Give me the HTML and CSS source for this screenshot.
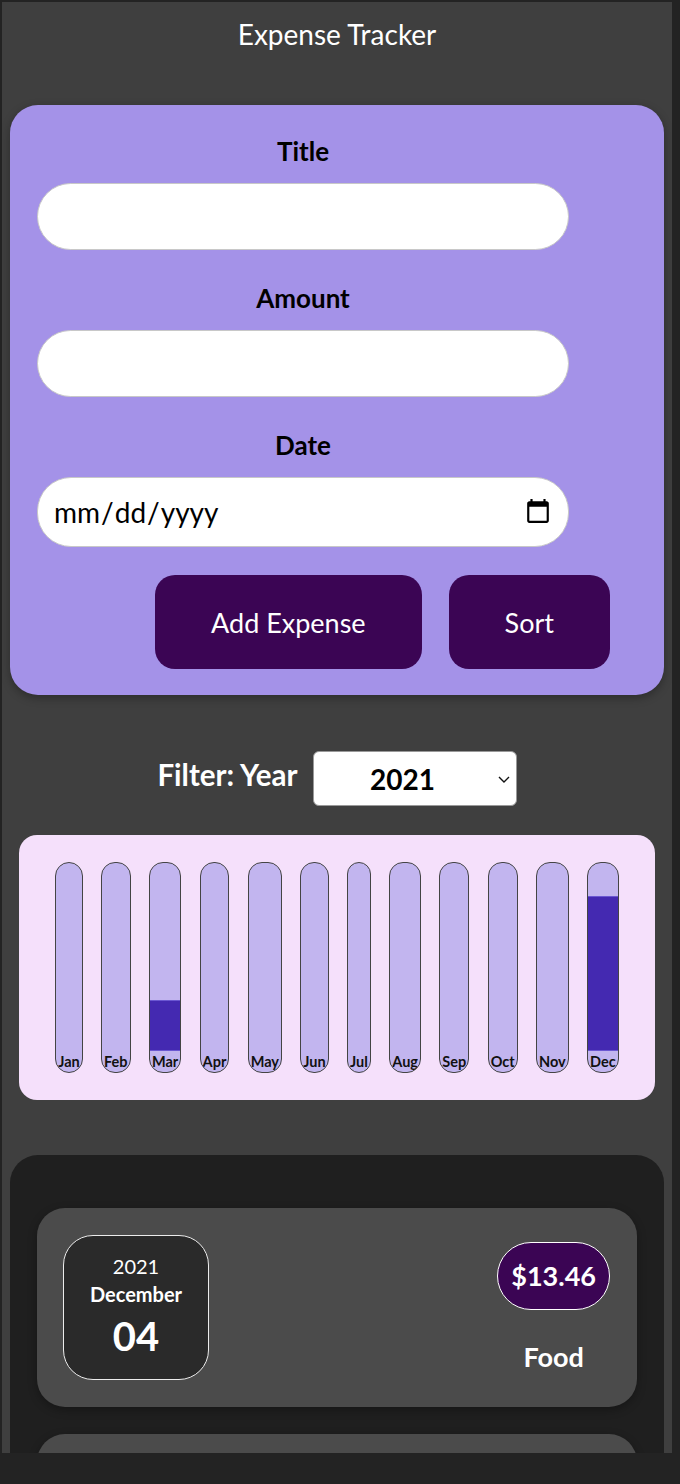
FILE: index.html
```html
<!DOCTYPE html>
<html lang="en">
<head>
  <meta charset="UTF-8" />
  <meta name="viewport" content="width=device-width, initial-scale=1.0"/>
  <title>Expense Tracker</title>
  <link rel="stylesheet" href="styles.css">
</head>
<body>

  <div class="app">
    <h1 class="app-title">Expense Tracker</h1>

    <!-- New expense form -->
    <div class="new-expense">
      <form>
        <div class="control">
          <label>Title</label>
          <input type="text" />
        </div>
        <div class="control">
          <label>Amount</label>
          <input type="number" />
        </div>
        <div class="control control-last">
          <label>Date</label>
          <input type="date" />
        </div>
        <div class="actions">
          <button type="button">Add Expense</button>
          <button type="button">Sort</button>
        </div>
      </form>
    </div>

    <!-- Year filter -->
    <div class="filter">
      <label>Filter: Year</label>
      <div class="select-wrap">
        <select>
          <option>2022</option>
          <option selected>2021</option>
          <option>2020</option>
          <option>2019</option>
        </select>
        <svg class="chevron" width="12" height="7" viewBox="0 0 12 7">
          <path d="M1 1l5 5 5-5" fill="none" stroke="#111" stroke-width="1.4" />
        </svg>
      </div>
    </div>

    <!-- Chart -->
    <div class="chart">
      <div class="bar"><div class="bar-track"><div class="bar-fill" style="height: 0%"></div></div><div class="bar-label">Jan</div></div>
      <div class="bar"><div class="bar-track"><div class="bar-fill" style="height: 0%"></div></div><div class="bar-label">Feb</div></div>
      <div class="bar"><div class="bar-track"><div class="bar-fill" style="height: 27.4%"></div></div><div class="bar-label">Mar</div></div>
      <div class="bar"><div class="bar-track"><div class="bar-fill" style="height: 0%"></div></div><div class="bar-label">Apr</div></div>
      <div class="bar"><div class="bar-track"><div class="bar-fill" style="height: 0%"></div></div><div class="bar-label">May</div></div>
      <div class="bar"><div class="bar-track"><div class="bar-fill" style="height: 0%"></div></div><div class="bar-label">Jun</div></div>
      <div class="bar"><div class="bar-track"><div class="bar-fill" style="height: 0%"></div></div><div class="bar-label">Jul</div></div>
      <div class="bar"><div class="bar-track"><div class="bar-fill" style="height: 0%"></div></div><div class="bar-label">Aug</div></div>
      <div class="bar"><div class="bar-track"><div class="bar-fill" style="height: 0%"></div></div><div class="bar-label">Sep</div></div>
      <div class="bar"><div class="bar-track"><div class="bar-fill" style="height: 0%"></div></div><div class="bar-label">Oct</div></div>
      <div class="bar"><div class="bar-track"><div class="bar-fill" style="height: 0%"></div></div><div class="bar-label">Nov</div></div>
      <div class="bar"><div class="bar-track"><div class="bar-fill" style="height: 82.6%"></div></div><div class="bar-label">Dec</div></div>
    </div>

    <!-- Expense list -->
    <div class="expenses">
      <ul class="expense-list">
        <li class="expense-item">
          <div class="expense-date">
            <div class="expense-date__year">2021</div>
            <div class="expense-date__month">December</div>
            <div class="expense-date__day">04</div>
          </div>
          <div class="expense-item__description">
            <div class="expense-item__price">$13.46</div>
            <h2>Food</h2>
          </div>
        </li>
        <li class="expense-item">
          <div class="expense-date">
            <div class="expense-date__year">2021</div>
            <div class="expense-date__month">March</div>
            <div class="expense-date__day">12</div>
          </div>
          <div class="expense-item__description">
            <div class="expense-item__price">$4.20</div>
            <h2>Coffee</h2>
          </div>
        </li>
      </ul>
    </div>
  </div>

</body>
</html>
```

FILE: styles.css
```css
* {
  box-sizing: border-box;
}

body {
  margin: 0;
  background: #232323;
  font-family: Lato, "Open Sans", sans-serif;
}

.app {
  width: 670px;
  height: 1451px;
  margin: 2px 0 0 2px;
  padding: 0 8px;
  background: #3f3f3f;
  overflow: hidden;
}

.app-title {
  margin: 0 0 54px;
  padding-top: 15px;
  color: #fff;
  font-size: 28px;
  font-weight: normal;
  line-height: 34px;
  text-align: center;
}

/* form */

.new-expense {
  background: #a492e8;
  border-radius: 28px;
  padding: 30px 27px 26px;
  box-shadow: 0 3px 10px rgba(0,0,0,0.3);
}

.control {
  width: 532px;
  margin-bottom: 32px;
  text-align: center;
}

.control-last {
  margin-bottom: 28px;
}

.control label {
  display: block;
  font-size: 26px;
  font-weight: bold;
  line-height: 33px;
  margin-bottom: 15px;
  color: #000;
}

.control input {
  display: block;
  width: 100%;
  height: 67px;
  padding: 0 15px;
  border: 1px solid #c8c8c8;
  border-radius: 34px;
  background: #fff;
  font: inherit;
  font-size: 28px;
  color: #000;
}

.control input[type="date"] {
  height: 70px;
  padding-right: 14px;
}

.actions {
  display: flex;
  justify-content: flex-end;
  gap: 27px;
  margin-right: 27px;
}

.actions button {
  height: 94px;
  padding: 0 56px;
  border: none;
  border-radius: 20px;
  background: #3b0554;
  color: #fff;
  font: inherit;
  font-size: 27px;
  cursor: pointer;
}

/* filter */

.filter {
  display: flex;
  justify-content: center;
  align-items: center;
  gap: 15px;
  margin-top: 56px;
}

.filter label {
  color: #fff;
  font-size: 29.5px;
  font-weight: bold;
  margin-top: -8px;
}

.select-wrap {
  position: relative;
}

.select-wrap select {
  display: block;
  width: 204px;
  height: 55px;
  padding: 0 24px 0 0;
  border: 1px solid #999;
  border-radius: 6px;
  background: #fff;
  appearance: none;
  font: inherit;
  font-size: 28px;
  font-weight: bold;
  text-align: center;
  text-align-last: center;
  color: #000;
}

.chevron {
  position: absolute;
  right: 7px;
  top: 25px;
  pointer-events: none;
}

/* chart */

.chart {
  display: flex;
  justify-content: space-around;
  height: 265px;
  margin: 29px 9px 0;
  padding: 27px;
  background: #f5e0fb;
  border-radius: 18px;
}

.bar {
  display: flex;
  flex-direction: column;
  height: 100%;
  border: 1.5px solid #444;
  border-radius: 14px;
  background: #c2b5ef;
  overflow: hidden;
}

.bar-track {
  flex: 1;
  display: flex;
  flex-direction: column;
  justify-content: flex-end;
}

.bar-fill {
  background: #4429b1;
  box-shadow: inset 0 1px #6b57d2, inset 0 -1px #6b57d2;
}

.bar-label {
  padding: 0 2px;
  font-size: 14.5px;
  font-weight: bold;
  line-height: 21px;
  text-align: center;
  color: #111;
}

/* expenses */

.expenses {
  margin-top: 55px;
  padding: 26px 27px;
  background: #1f1f1f;
  border-radius: 28px;
}

.expense-list {
  list-style: none;
  margin: 0;
  padding: 0;
}

.expense-item {
  display: flex;
  justify-content: space-between;
  align-items: center;
  margin: 27px 0;
  padding: 27px 27px 27px 26px;
  background: #4b4b4b;
  border-radius: 28px;
  box-shadow: 0 3px 10px rgba(0,0,0,0.3);
}

.expense-date {
  display: flex;
  flex-direction: column;
  align-items: center;
  justify-content: center;
  width: 146px;
  height: 145px;
  border: 1px solid #ececec;
  border-radius: 30px;
  background: #2a2a2a;
  color: #fff;
}

.expense-date__year {
  font-size: 20px;
  line-height: 26px;
}

.expense-date__month {
  font-size: 20px;
  font-weight: bold;
  line-height: 30px;
}

.expense-date__day {
  font-size: 40px;
  font-weight: bold;
  line-height: 54px;
}

.expense-item__description {
  display: flex;
  flex-direction: column;
  align-items: center;
}

.expense-item__price {
  height: 68px;
  padding: 0 13px;
  border: 1px solid #fff;
  border-radius: 34px;
  background: #3b0554;
  color: #fff;
  font-size: 27px;
  font-weight: bold;
  line-height: 66px;
}

.expense-item__description h2 {
  margin: 31px 0 0;
  color: #fff;
  font-size: 27px;
  line-height: 33px;
  margin-top: 30px;
}
```
